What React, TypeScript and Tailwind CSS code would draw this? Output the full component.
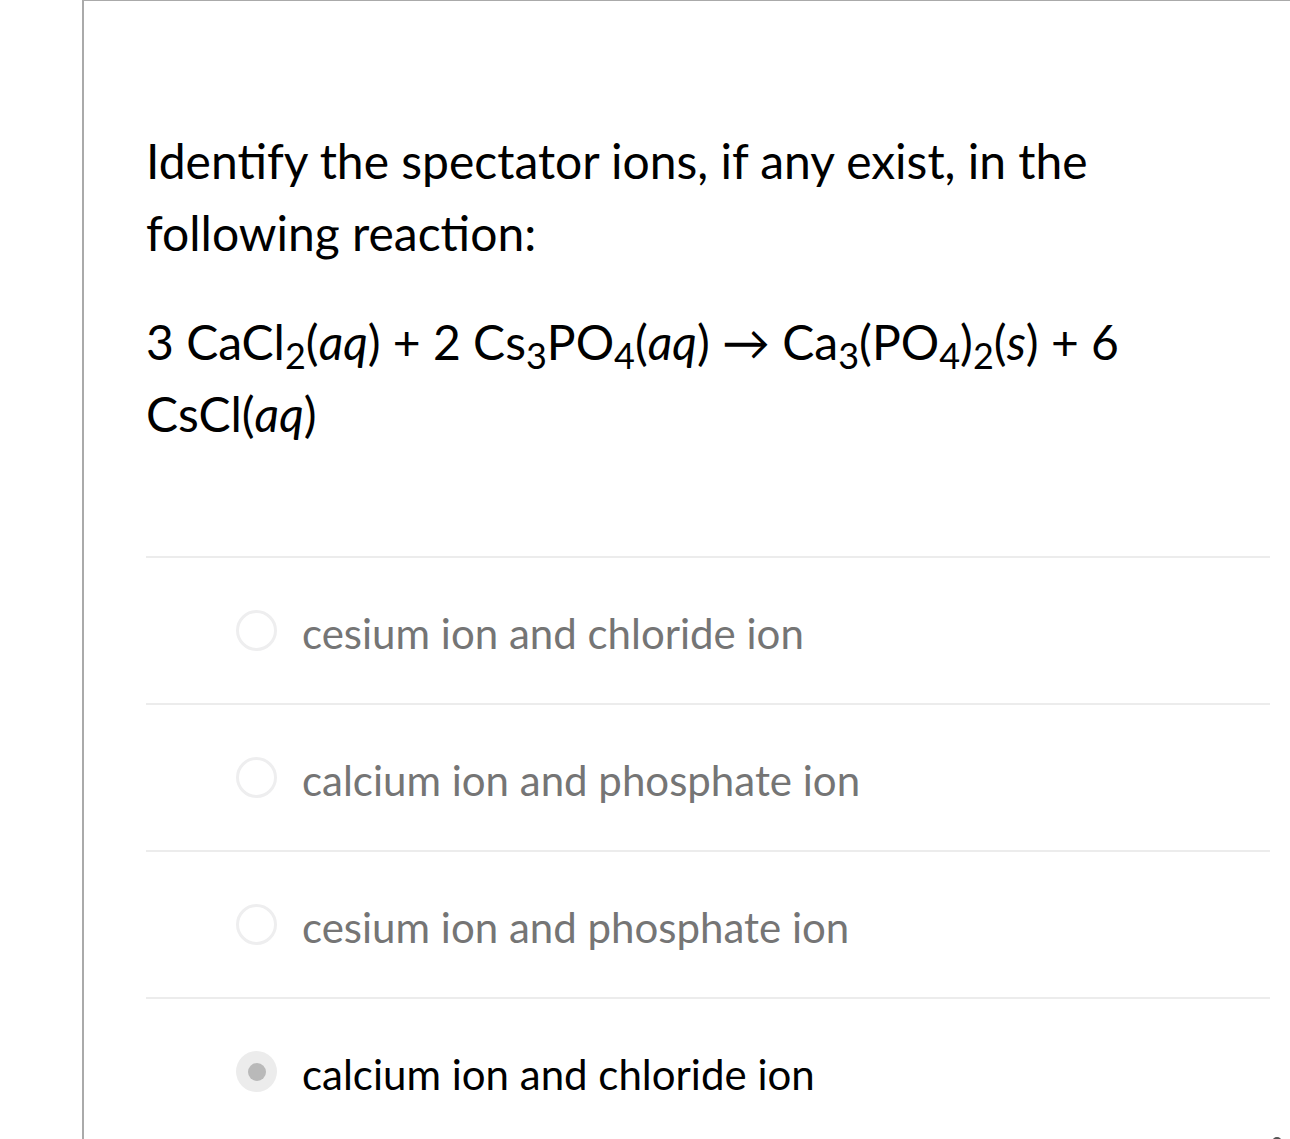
const options = [
  { label: 'cesium ion and chloride ion', selected: false },
  { label: 'calcium ion and phosphate ion', selected: false },
  { label: 'cesium ion and phosphate ion', selected: false },
  { label: 'calcium ion and chloride ion', selected: true },
]

function Radio({ selected }: { selected: boolean }) {
  if (selected) {
    return (
      <span className="flex items-center justify-center w-[41px] h-[41px] rounded-full bg-[#ececec] shrink-0">
        <span className="w-[18px] h-[18px] rounded-full bg-[#b9b9b9]" />
      </span>
    )
  }
  return <span className="w-[41px] h-[41px] rounded-full border-[3px] border-[#eeeeef] shrink-0" />
}

export default function App() {
  return (
    <div className="relative h-[1139px] overflow-hidden bg-white pl-[82px] font-['Lato',_sans-serif]">
      <div className="h-full border-l-2 border-t border-[#aaaaaa] pl-[62px] pr-[20px] pt-[124px]">
        <p className="text-[48px] leading-[72px] text-black">
          Identify the spectator ions, if any exist, in the following reaction:
        </p>
        <p className="mt-[37px] text-[48px] leading-[72px] text-black">
          3 CaCl<sub>2</sub>(<i>aq</i>) + 2 Cs<sub>3</sub>PO<sub>4</sub>(<i>aq</i>) → Ca<sub>3</sub>(PO
          <sub>4</sub>)<sub>2</sub>(<i>s</i>) + 6 CsCl(<i>aq</i>)
        </p>

        <div className="mt-[106px]">
          {options.map((o) => (
            <div
              key={o.label}
              className="flex h-[147px] items-center gap-[25px] border-t-2 border-[#ececec] pl-[90px]"
            >
              <Radio selected={o.selected} />
              <span
                className={
                  o.selected
                    ? 'pt-[4px] text-[42px] leading-none text-black'
                    : 'pt-[4px] text-[42px] leading-none text-[#757575]'
                }
              >
                {o.label}
              </span>
            </div>
          ))}
        </div>
      </div>
      <span className="absolute right-[8px] bottom-[-8px] w-[10px] h-[10px] rounded-full bg-[#555]" />
    </div>
  )
}
